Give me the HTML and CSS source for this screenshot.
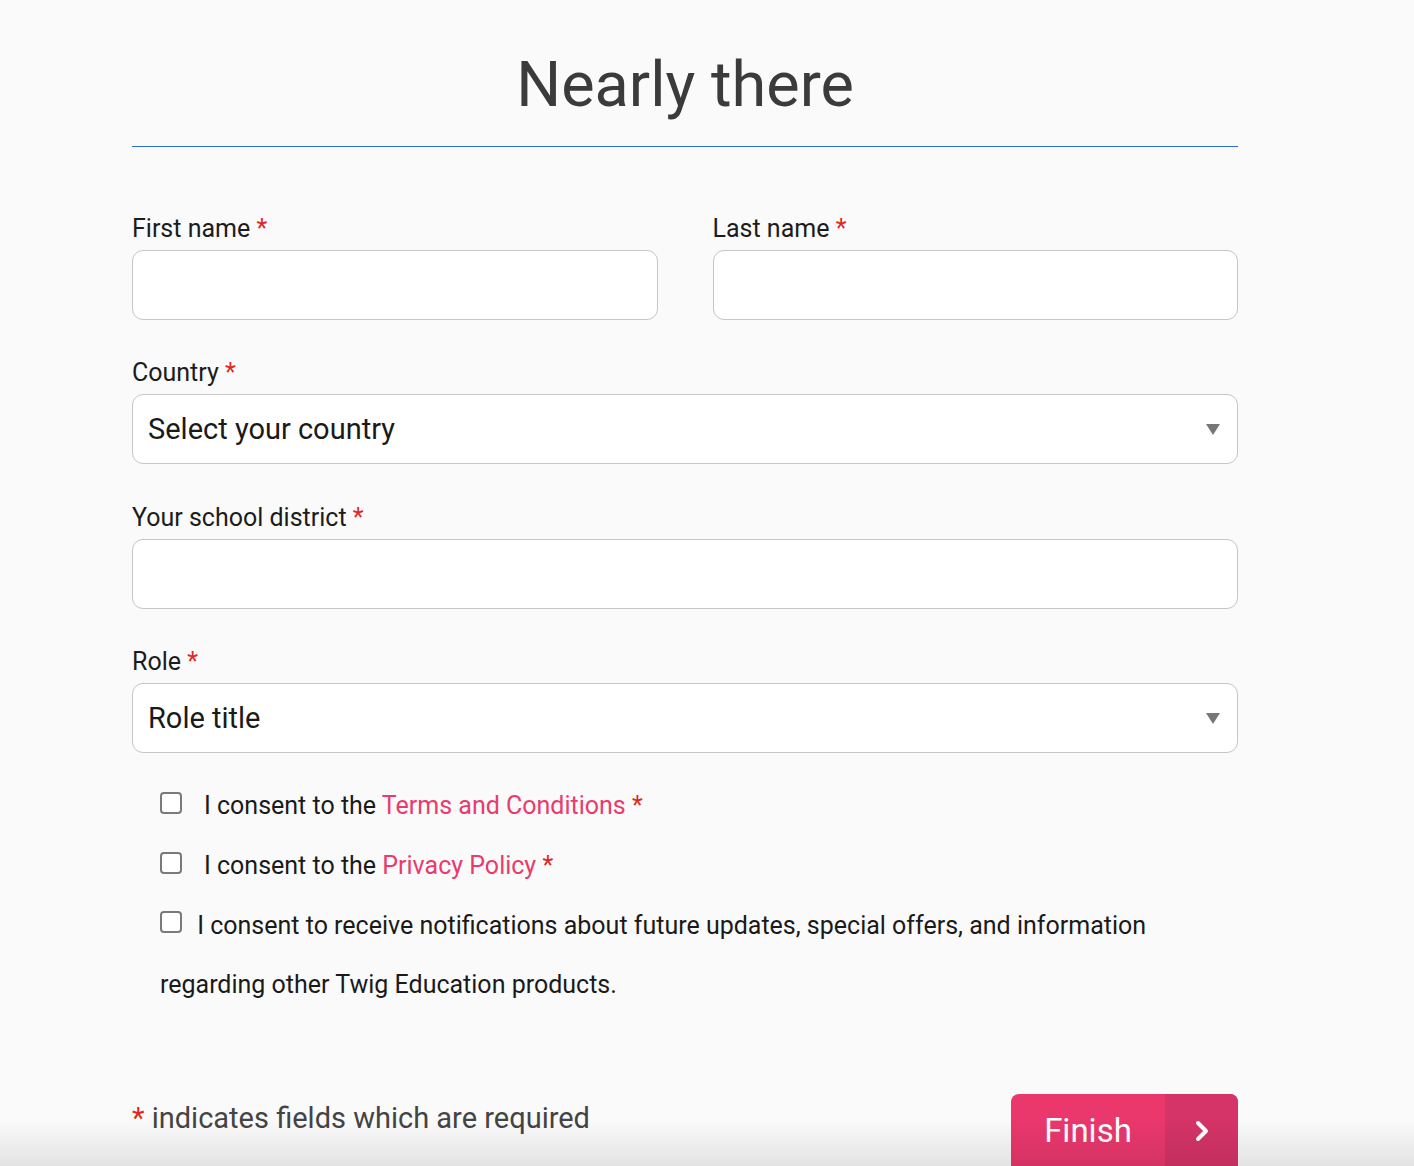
FILE: index.html
```html
<!DOCTYPE html>
<html lang="en">
<head>
<meta charset="utf-8">
<title>Nearly there</title>
<link rel="stylesheet" href="styles.css">
</head>
<body>
<main class="page">
  <h1 class="title">Nearly there</h1>
  <form class="form">
    <div class="row two">
      <div class="field">
        <label class="label">First name <span class="req">*</span></label>
        <input class="input" type="text">
      </div>
      <div class="field">
        <label class="label">Last name <span class="req">*</span></label>
        <input class="input" type="text">
      </div>
    </div>
    <div class="field">
      <label class="label">Country <span class="req">*</span></label>
      <div class="select">
        <span class="select-text">Select your country</span>
        <span class="caret"></span>
      </div>
    </div>
    <div class="field">
      <label class="label">Your school district <span class="req">*</span></label>
      <input class="input" type="text">
    </div>
    <div class="field">
      <label class="label">Role <span class="req">*</span></label>
      <div class="select">
        <span class="select-text">Role title</span>
        <span class="caret"></span>
      </div>
    </div>
    <div class="consents">
      <label class="consent"><span class="box"></span><span class="ctext">I consent to the <span class="link">Terms and Conditions</span> <span class="req">*</span></span></label>
      <label class="consent"><span class="box"></span><span class="ctext">I consent to the <span class="link">Privacy Policy</span> <span class="req">*</span></span></label>
      <p class="consent-long"><span class="box inline"></span> I consent to receive notifications about future updates, special offers, and information regarding other Twig Education products.</p>
    </div>
    <div class="footer">
      <p class="note"><span class="req">*</span> indicates fields which are required</p>
      <button class="finish" type="button"><span class="finish-text">Finish</span><span class="finish-arrow"><svg width="18" height="24" viewBox="0 0 18 24"><path d="M5 4 L13 12 L5 20" fill="none" stroke="#fff" stroke-width="4" stroke-linecap="round" stroke-linejoin="round"/></svg></span></button>
    </div>
  </form>
</main>
<div class="shade"></div>
</body>
</html>
```

FILE: styles.css
```css
* { box-sizing: border-box; }
html, body { margin: 0; padding: 0; }
body {
  background: #fafafa;
  font-family: Roboto, "Liberation Sans", Arial, sans-serif;
  color: #1c1c1c;
  height: 1166px;
  overflow: hidden;
}
.page {
  width: 1106px;
  margin-left: 132px;
}
.title {
  margin: 0;
  padding-top: 47px;
  height: 147px;
  text-align: center;
  font-size: 63px;
  font-weight: 400;
  line-height: 76px;
  color: #3b3b3b;
  border-bottom: 1px solid #2e6bd8;
}
.form {
  padding-top: 64px;
  display: flex;
  flex-direction: column;
}
.row.two {
  display: grid;
  grid-template-columns: 1fr 1fr;
  column-gap: 55px;
}
.field {
  display: flex;
  flex-direction: column;
  margin-bottom: 35.4px;
}
.label {
  font-size: 25px;
  line-height: 32px;
  padding-top: 2px;
  margin-bottom: 5px;
  color: #1c1c1c;
}
.req { color: #e0281f; }
.input {
  height: 70px;
  border: 1px solid #c6c6c6;
  border-radius: 11px;
  background: #fff;
  font: inherit;
}
.select {
  height: 70px;
  border: 1px solid #c6c6c6;
  border-radius: 11px;
  background: #fff;
  display: flex;
  align-items: center;
  justify-content: space-between;
  padding: 0 16px 0 15px;
}
.select-text {
  font-size: 29px;
  color: #1a1a1a;
}
.caret {
  width: 0;
  height: 0;
  border-left: 7px solid transparent;
  border-right: 7px solid transparent;
  border-top: 11px solid #777;
  margin-right: 1px;
}
.consents {
  padding-left: 28px;
  margin-top: -13px;
  padding-right: 58px;
}
.consent {
  display: flex;
  align-items: center;
  height: 60px;
  font-size: 25px;
  color: #1a1a1a;
}
.box {
  display: inline-block;
  width: 22px;
  height: 22px;
  border: 2px solid #7a7a7a;
  border-radius: 4px;
  background: #fff;
  margin-right: 22px;
  flex: none;
  position: relative;
  top: -3px;
}
.box.inline {
  margin-right: 9px;
  vertical-align: middle;
  top: -5px;
}
.link { color: #ea3a6e; }
.consent-long {
  margin: 0;
  font-size: 25px;
  line-height: 59px;
  color: #1a1a1a;
}
.footer {
  display: flex;
  justify-content: space-between;
  align-items: flex-start;
  margin-top: 80px;
}
.note {
  margin: 7px 0 0 0;
  font-size: 29px;
  line-height: 34px;
  color: #444;
}
.finish {
  display: flex;
  width: 227px;
  height: 80px;
  padding: 0;
  border: none;
  border-radius: 8px;
  overflow: hidden;
  background: #ea386d;
  font-family: inherit;
  cursor: pointer;
}
.finish-text {
  flex: 1;
  display: flex;
  align-items: center;
  justify-content: center;
  height: 74px;
  color: #fff;
  font-size: 33px;
}
.finish-arrow {
  width: 73px;
  height: 100%;
  background: #d53468;
  display: flex;
  justify-content: center;
  padding-top: 25px;
}
.shade {
  position: fixed;
  left: 0;
  right: 0;
  bottom: 0;
  height: 46px;
  background: linear-gradient(rgba(0,0,0,0), rgba(0,0,0,0.09));
  pointer-events: none;
}
```
